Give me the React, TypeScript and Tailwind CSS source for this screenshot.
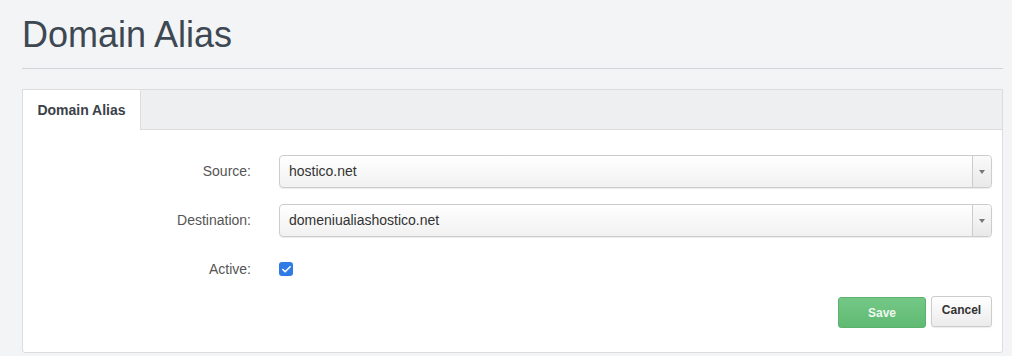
import { Check } from "lucide-react";

const fields = [
  { label: "Source:", value: "hostico.net" },
  { label: "Destination:", value: "domeniualiashostico.net" },
];

function Select({ value }: { value: string }) {
  return (
    <div className="flex h-[33px] flex-1 items-stretch rounded-[4px] border border-[#cccccc] bg-gradient-to-b from-white to-[#f1f1f1] shadow-[0_1px_1px_rgba(0,0,0,0.08)]">
      <div className="flex flex-1 items-center pl-[9px] text-[14px] text-[#333]">{value}</div>
      <div className="flex w-[19px] items-center justify-center rounded-r-[4px] border-l border-[#cccccc] bg-gradient-to-b from-[#fafafa] to-[#e9e9e9]">
        <span className="h-0 w-0 border-x-[3.5px] border-t-[4px] border-x-transparent border-t-[#777]" />
      </div>
    </div>
  );
}

export default function App() {
  return (
    <div className="min-h-[356px] bg-[#f3f4f6] pl-[22px] pr-[9px] pt-[15px] font-['Liberation_Sans',Arial,sans-serif]">
      <h1 className="text-[36px] leading-[40px] text-[#3d4852]">Domain Alias</h1>
      <div className="mt-[13px] border-t border-[#d2d4d8]" />

      <div className="mt-[20px] rounded-b-[3px] border border-[#dddddd] bg-white">
        <div className="flex h-[40px] border-b border-[#dddddd] bg-[#eeeff1]">
          <div className="-mb-px flex h-[40px] w-[118px] items-center justify-center border-r border-[#dddddd] bg-white text-[14px] font-bold text-[#3b4148]">
            Domain Alias
          </div>
        </div>

        <div className="pt-[25px] pb-[24px] pr-[10px]">
          <div className="flex flex-col gap-[16px]">
            {fields.map((f) => (
              <div key={f.label} className="flex items-center">
                <div className="w-[228px] shrink-0 text-right text-[14px] text-[#555]">{f.label}</div>
                <div className="ml-[28px] flex flex-1">
                  <Select value={f.value} />
                </div>
              </div>
            ))}
          </div>

          <div className="mt-[22px] flex h-[20px] items-center">
            <div className="w-[228px] shrink-0 text-right text-[14px] text-[#555]">Active:</div>
            <div className="ml-[28px] flex h-[14px] w-[14px] items-center justify-center rounded-[3px] bg-[#2f7ae5]">
              <Check className="h-[11px] w-[11px] text-white" strokeWidth={3.5} />
            </div>
          </div>

          <div className="mt-[17px] flex items-start justify-end gap-[5px]">
            <button className="mt-px h-[31px] w-[88px] rounded-[3px] border border-[#5cb16c] bg-gradient-to-b from-[#74c886] to-[#5fba72] text-[12px] font-bold text-[#eef8f0]">
              Save
            </button>
            <button className="h-[31px] w-[61px] rounded-[3px] border border-[#cccccc] bg-gradient-to-b from-white to-[#ebebeb] pb-[3px] text-[12px] font-bold text-[#333] shadow-[0_1px_1px_rgba(0,0,0,0.08)]">
              Cancel
            </button>
          </div>
        </div>
      </div>
    </div>
  );
}
